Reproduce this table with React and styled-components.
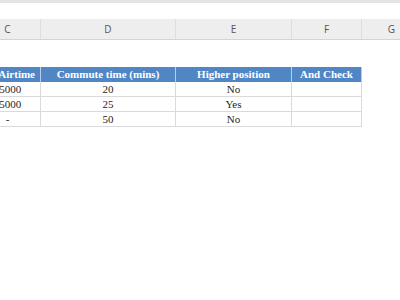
import React from 'react'
import styled, { createGlobalStyle } from 'styled-components'

const GlobalStyle = createGlobalStyle`
  html, body {
    margin: 0;
    padding: 0;
    background: #ffffff;
    overflow: hidden;
  }
`

// column widths of the visible sheet, C is cut off at the left edge
const COLS = '66px 135px 116px 70px 60px'

const columnLetters = ['C', 'D', 'E', 'F', 'G']

const headers = ['Airtime', 'Commute time (mins)', 'Higher position', 'And Check']

const rows = [
  ['25000', '20', 'No', ''],
  ['25000', '25', 'Yes', ''],
  ['-', '50', 'No', ''],
]

const Sheet = styled.div`
  width: 400px;
  height: 300px;
  overflow: hidden;
  background: #fff;
  display: flex;
  flex-direction: column;
`

const TopStrip = styled.div`
  height: 3px;
  background: #e4e4e4;
`

const FormulaGap = styled.div`
  height: 16px;
  background: #fff;
`

const ColumnBar = styled.div`
  display: grid;
  grid-template-columns: ${COLS};
  margin-left: -25px;
  height: 20px;
  background: #eeeeee;
  border-bottom: 1px solid #d4d4d4;
`

const ColumnLetter = styled.div`
  display: flex;
  align-items: flex-end;
  justify-content: center;
  padding-bottom: 3px;
  box-sizing: border-box;
  border-right: 1px solid #dedede;
  font-family: 'Open Sans', 'Liberation Sans', sans-serif;
  font-size: 10px;
  color: #555;
`

const Grid = styled.div`
  margin-top: 27px;
  margin-left: -25px;
  display: grid;
  grid-template-columns: 66px 135px 116px 70px;
  width: 387px;
  font-family: 'Liberation Serif', 'Times New Roman', serif;
  font-size: 11px;
`

const HeadCell = styled.div`
  height: 15px;
  line-height: 15px;
  background: #5086c3;
  color: #fff;
  font-weight: bold;
  text-align: ${p => p.$align || 'center'};
  padding-right: ${p => (p.$align === 'right' ? '5px' : '0')};
  box-sizing: border-box;
  border-right: 1px solid #b9cde4;
  white-space: nowrap;
  overflow: hidden;
`

const Cell = styled.div`
  height: 15px;
  line-height: 15px;
  text-align: center;
  color: #1e1e1e;
  box-sizing: border-box;
  border-right: 1px solid #dadada;
  border-bottom: 1px solid #dadada;
  white-space: nowrap;
`

export default function App() {
  return (
    <Sheet>
      <GlobalStyle />
      <TopStrip />
      <FormulaGap />
      <ColumnBar>
        {columnLetters.map(l => (
          <ColumnLetter key={l}>{l}</ColumnLetter>
        ))}
      </ColumnBar>
      <Grid>
        {headers.map((h, i) => (
          <HeadCell key={h} $align={i === 0 ? 'right' : 'center'}>
            {h}
          </HeadCell>
        ))}
        {rows.map((r, ri) =>
          r.map((v, ci) => <Cell key={ri + '-' + ci}>{v}</Cell>)
        )}
      </Grid>
    </Sheet>
  )
}
